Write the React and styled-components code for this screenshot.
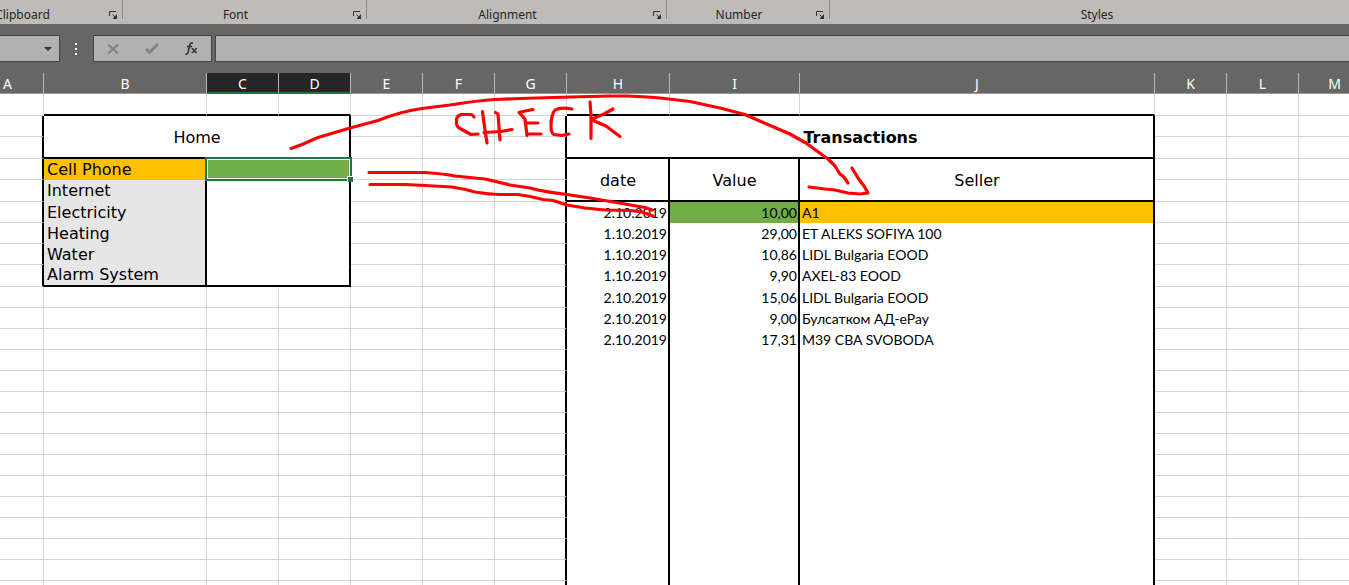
import React from "react";
import styled, { createGlobalStyle } from "styled-components";

const GlobalStyle = createGlobalStyle`
  * {
    box-sizing: border-box;
  }

  body {
    margin: 0;
    background-color: #ffffff;
    overflow: hidden;
  }
`;

const StApp = styled.div`
  display: flex;
  flex-direction: column;
  height: 100vh;
  overflow: hidden;
`;

const StRibbon = styled.div`
  display: flex;
  height: 24px;
  background-color: #bfbbb8;
`;

const StGroup = styled.div`
  display: flex;
  align-items: center;
  justify-content: flex-end;
  flex: ${(props) => (props.$width ? `0 0 ${props.$width}px` : "1")};
  min-width: 0;
  height: 19px;
  padding-right: 4px;
  padding-left: ${(props) => (props.$width ? 0 : 24)}px;

  border-right: ${(props) => (props.$width ? "1px solid #8a8785" : "none")};
`;

const StGroupName = styled.span`
  flex: ${(props) => (props.$width ? `0 0 ${props.$width}px` : "1")};
  padding: 10px 5px 0 0;

  color: #262626;
  font-family: "Noto Sans", sans-serif;
  font-size: 12px;
  line-height: 18px;
  text-align: center;
`;

const StLauncher = styled.button`
  display: flex;
  padding: 10px 0 0;

  background-color: transparent;
  border: none;

  cursor: pointer;
`;

const StFormulaBar = styled.div`
  display: flex;
  height: 49px;
  padding: 11px 0;

  background-color: #666666;
`;

const StNameBox = styled.button`
  display: flex;
  align-items: center;
  justify-content: flex-end;
  width: 60px;
  padding: 0 7px;

  background-color: #b1b1b1;
  border: 1px solid #444444;
  border-left: none;
`;

const StDots = styled.div`
  display: flex;
  align-items: center;
  justify-content: center;
  width: 33px;
  padding-right: 2px;
`;

const StFormulaBtns = styled.div`
  display: flex;
  align-items: center;
  justify-content: space-around;
  width: 119px;
  margin-right: 3px;

  background-color: #b1b1b1;
  border: 1px solid #444444;
`;

const StFormulaBtn = styled.button`
  display: flex;
  padding: 0;

  background-color: transparent;
  border: none;
`;

const StFormulaInput = styled.input`
  flex: 1;
  padding: 0 6px;

  background-color: #b1b1b1;
  border: 1px solid #444444;
  border-right: none;
  border-radius: 0;
  outline: none;
`;

const StSheet = styled.div`
  position: relative;
  flex: 1;
  overflow: hidden;
`;

const StTable = styled.table`
  width: 1371px;

  border-collapse: separate;
  border-spacing: 0;
  table-layout: fixed;
`;

const StCol = styled.col`
  width: ${(props) => props.$width}px;
`;

const StColHead = styled.th`
  height: 21px;
  padding: 2px ${(props) => (props.$cut ? 28 : 0)}px 0 0;

  background-color: ${(props) => (props.$active ? "#262626" : "#666666")};
  border-right: 1px solid #b8b8b8;
  border-bottom: ${(props) =>
    props.$active ? "2px solid #217346" : "1px solid #999999"};

  color: #ffffff;
  font-family: "Noto Sans", sans-serif;
  font-size: 14px;
  font-weight: 400;
  line-height: 16px;
`;

const StRow = styled.tr`
  height: ${(props) => props.$height}px;
`;

// every cell draws only its right and bottom line
const lines = {
  grid: "1px solid #d4d4d4",
  thick: "2px solid #000000",
  none: "none",
};

const StCell = styled.td`
  position: relative;
  padding: 0;

  background-color: ${(props) => props.$bg || "#ffffff"};
  border-right: ${(props) => lines[props.$right || "grid"]};
  border-bottom: ${(props) => lines[props.$bottom || "grid"]};
`;

const StTitle = styled(StCell)`
  padding: 2px 0 0 1px;

  font-family: "DejaVu Sans", sans-serif;
  font-size: 16px;
  font-weight: ${(props) => (props.$bold ? 700 : 400)};
  line-height: 20px;
  text-align: center;
`;

const StLabel = styled(StCell)`
  padding-left: 3px;

  font-family: "DejaVu Sans", sans-serif;
  font-size: 16px;
  line-height: 18px;
`;

const StData = styled(StCell)`
  padding: 0 1px 0 2px;

  font-family: Lato, sans-serif;
  font-size: 14px;
  line-height: 18px;
  text-align: ${(props) => props.$align || "left"};
  white-space: nowrap;
`;

const StSelection = styled.div`
  position: absolute;
  inset: -2px -1px -1px -2px;
  z-index: 1;

  border: 2px solid #217346;
  box-shadow: inset 0 0 0 1px #ffffff;
`;

const StHandle = styled.div`
  position: absolute;
  right: -3px;
  bottom: -3px;
  width: 6px;
  height: 6px;

  background-color: #217346;
  border-top: 1px solid #ffffff;
  border-left: 1px solid #ffffff;
`;

const StInk = styled.svg`
  position: absolute;
  top: 0;
  left: 0;
  z-index: 2;

  pointer-events: none;
`;

const columns = [
  { name: "A", width: 44 },
  { name: "B", width: 163 },
  { name: "C", width: 72 },
  { name: "D", width: 72 },
  { name: "E", width: 72 },
  { name: "F", width: 72 },
  { name: "G", width: 72 },
  { name: "H", width: 103 },
  { name: "I", width: 130 },
  { name: "J", width: 355 },
  { name: "K", width: 72 },
  { name: "L", width: 72 },
  { name: "M", width: 72 },
];

const rowHeights = [
  22, 21, 22, 21, 22, 21, 21, 21, 22, 21, 21, 21, 21, 21, 21, 21, 21, 21, 21,
  21, 21, 21, 21, 21,
];

const bills = [
  "Cell Phone",
  "Internet",
  "Electricity",
  "Heating",
  "Water",
  "Alarm System",
];

const transactions = [
  { date: "2.10.2019", value: "10,00", seller: "A1" },
  { date: "1.10.2019", value: "29,00", seller: "ET ALEKS SOFIYA 100" },
  { date: "1.10.2019", value: "10,86", seller: "LIDL Bulgaria EOOD" },
  { date: "1.10.2019", value: "9,90", seller: "AXEL-83 EOOD" },
  { date: "2.10.2019", value: "15,06", seller: "LIDL Bulgaria EOOD" },
  { date: "2.10.2019", value: "9,00", seller: "Булсатком АД-ePay" },
  { date: "2.10.2019", value: "17,31", seller: "M39 CBA SVOBODA" },
];

const Launcher = ({ label }) => (
  <StLauncher aria-label={label}>
    <svg width="9" height="9" viewBox="0 0 9 9" fill="none" stroke="#333333">
      <path d="M0.5 6V1.5H7M3.5 4.5L7 8" />
      <path d="M8 4V9H3.5Z" fill="#333333" stroke="none" />
    </svg>
  </StLauncher>
);

const Ribbon = () => (
  <StRibbon>
    <StGroup $width={123}>
      {/* wider than its group, the start runs off the window */}
      <StGroupName $width={168}>Clipboard</StGroupName>
      <Launcher label="Clipboard settings" />
    </StGroup>
    <StGroup $width={244}>
      <StGroupName>Font</StGroupName>
      <Launcher label="Font settings" />
    </StGroup>
    <StGroup $width={300}>
      <StGroupName>Alignment</StGroupName>
      <Launcher label="Alignment settings" />
    </StGroup>
    <StGroup $width={163}>
      <StGroupName>Number</StGroupName>
      <Launcher label="Number settings" />
    </StGroup>
    <StGroup>
      <StGroupName>Styles</StGroupName>
    </StGroup>
  </StRibbon>
);

const FormulaBar = () => (
  <StFormulaBar>
    <StNameBox aria-label="Name box">
      <svg width="8" height="4" viewBox="0 0 8 4">
        <path d="M0 0H8L4 4Z" fill="#333333" />
      </svg>
    </StNameBox>
    <StDots>
      <svg width="2" height="12" viewBox="0 0 2 12" fill="#ffffff">
        <path d="M0 0H2V2H0ZM0 5H2V7H0ZM0 10H2V12H0Z" />
      </svg>
    </StDots>
    <StFormulaBtns>
      <StFormulaBtn aria-label="Cancel">
        <svg width="12" height="10" viewBox="0 0 12 10">
          <path d="M1 0.5L11 9.5M11 0.5L1 9.5" stroke="#808080" strokeWidth="2" />
        </svg>
      </StFormulaBtn>
      <StFormulaBtn aria-label="Enter">
        <svg width="14" height="11" viewBox="0 0 14 11" fill="none">
          <path d="M1 6L4.5 9.5L13 1" stroke="#808080" strokeWidth="2.6" />
        </svg>
      </StFormulaBtn>
      <StFormulaBtn aria-label="Insert function">
        <svg width="13" height="13" viewBox="0 0 13 13" fill="none" stroke="#333333">
          <path d="M0.5 12C3 13 3.5 9 4 6.5C4.5 3 5 0 8 1M2 4.5H7" strokeWidth="1.6" />
          <path d="M6.5 6.5C9 5.5 9 11.5 12 10.5M12 6.5C10 6 9 11 6.5 10.5" strokeWidth="1.5" />
        </svg>
      </StFormulaBtn>
    </StFormulaBtns>
    <StFormulaInput aria-label="Formula" />
  </StFormulaBar>
);

// columns B, C and D of one row
const HomeCells = ({ row }) => {
  if (row === 0) {
    return (
      <>
        <StCell $bottom="thick" />
        <StCell $bottom="thick" />
        <StCell $bottom="thick" />
      </>
    );
  }
  if (row === 1) {
    return (
      <StTitle colSpan={3} rowSpan={2} $right="thick" $bottom="thick">
        Home
      </StTitle>
    );
  }
  if (row === 2) return null;
  if (row > 8) {
    return (
      <>
        <StCell />
        <StCell />
        <StCell />
      </>
    );
  }

  const isFirst = row === 3;
  const bottom = row === 8 ? "thick" : "none";
  return (
    <>
      <StLabel
        $bg={isFirst ? "#ffc000" : "#e7e6e6"}
        $right="thick"
        $bottom={bottom}
      >
        {bills[row - 3]}
      </StLabel>
      <StCell
        colSpan={2}
        $bg={isFirst ? "#70ad47" : "#ffffff"}
        $right={isFirst ? "none" : "thick"}
        $bottom={bottom}
      >
        {isFirst && (
          <StSelection>
            <StHandle />
          </StSelection>
        )}
      </StCell>
    </>
  );
};

// columns H, I and J of one row
const TransactionCells = ({ row }) => {
  if (row === 0) {
    return (
      <>
        <StCell $bottom="thick" />
        <StCell $bottom="thick" />
        <StCell $bottom="thick" />
      </>
    );
  }
  if (row === 1) {
    return (
      <StTitle colSpan={3} rowSpan={2} $bold $right="thick" $bottom="thick">
        Transactions
      </StTitle>
    );
  }
  if (row === 3) {
    return (
      <>
        <StTitle rowSpan={2} $right="thick" $bottom="thick">
          date
        </StTitle>
        <StTitle rowSpan={2} $right="thick" $bottom="thick">
          Value
        </StTitle>
        <StTitle rowSpan={2} $right="thick" $bottom="thick">
          Seller
        </StTitle>
      </>
    );
  }
  if (row === 2 || row === 4) return null;

  const item = transactions[row - 5] || {};
  const isFirst = row === 5;
  return (
    <>
      <StData $align="right" $right="thick" $bottom="none">
        {item.date}
      </StData>
      <StData
        $align="right"
        $bg={isFirst && "#70ad47"}
        $right="thick"
        $bottom="none"
      >
        {item.value}
      </StData>
      <StData $bg={isFirst && "#ffc000"} $right="thick" $bottom="none">
        {item.seller}
      </StData>
    </>
  );
};

// red pen strokes over the cells
const Ink = () => (
  <StInk
    width="1349"
    height="512"
    viewBox="0 73 1349 512"
    fill="none"
    stroke="#ff0000"
    strokeWidth="3.2"
    strokeLinecap="round"
    strokeLinejoin="round"
  >
    <path d="M291 148.5L302 144.5L318 137.5L350 128L378 120.5Q402 111 422 108.5L450 105Q478 100.5 495 99.5L520 98.5L570 97L610 96H628Q650 97 660 98L690 101.5L720 108L745 114.5L762 122L790 134L806 143L828 159L835 166L840 174L844 177L848 183" />
    <path d="M852 168L858 178L864 186L868 193L860 194L848 193L835 190L825 189L809 187" />
    <path d="M369 172.5H425Q445 174 455 176L485 179L510 185L530 188Q545 192 567 194.5L590 198L625 204L645 207.5L652 210" />
    <path d="M370 184.5H405L425 185.5L452 187Q465 189 475 192Q490 194.5 500 194.5H518Q530 196 543 199.5L553 200.5L567 205L585 208L605 210L630 210.5L642 212L653 216" />
    <path d="M474 117Q473 114.5 470 114.5H461Q457 116 456.5 119V124Q457 127 461 129L471 134.5L478 134" />
    <path d="M482.5 111.5L484 123L487 143M495.5 112.5L498 114L500 140M484 132.5L501 131.5L512 129.5" />
    <path d="M533 109.5L523 111.5L519 112.5L525 119L527 135.5M527 123H538M527 134L541 134" />
    <path d="M572 109Q560 107 555 110Q551 115 551 126Q551 133 554 134.5L562 135.5L569 134" />
    <path d="M590 102L591 115V138.5M613 109L604 114L591 119.5L606 126L620 136.5" />
  </StInk>
);

const App = () => {
  return (
    <StApp>
      <GlobalStyle />
      <Ribbon />
      <FormulaBar />
      <StSheet>
        <StTable>
          <colgroup>
            {columns.map((column) => (
              <StCol key={column.name} $width={column.width} />
            ))}
          </colgroup>
          <thead>
            <tr>
              {columns.map((column) => (
                <StColHead
                  key={column.name}
                  $cut={column.name === "A"}
                  $active={column.name === "C" || column.name === "D"}
                >
                  {column.name}
                </StColHead>
              ))}
            </tr>
          </thead>
          <tbody>
            {rowHeights.map((height, row) => (
              <StRow key={row} $height={height}>
                <StCell $right={row > 0 && row < 9 ? "thick" : "grid"} />
                <HomeCells row={row} />
                <StCell />
                <StCell />
                <StCell $right={row > 0 ? "thick" : "grid"} />
                <TransactionCells row={row} />
                <StCell />
                <StCell />
                <StCell />
              </StRow>
            ))}
          </tbody>
        </StTable>
        <Ink />
      </StSheet>
    </StApp>
  );
};

export default App;
